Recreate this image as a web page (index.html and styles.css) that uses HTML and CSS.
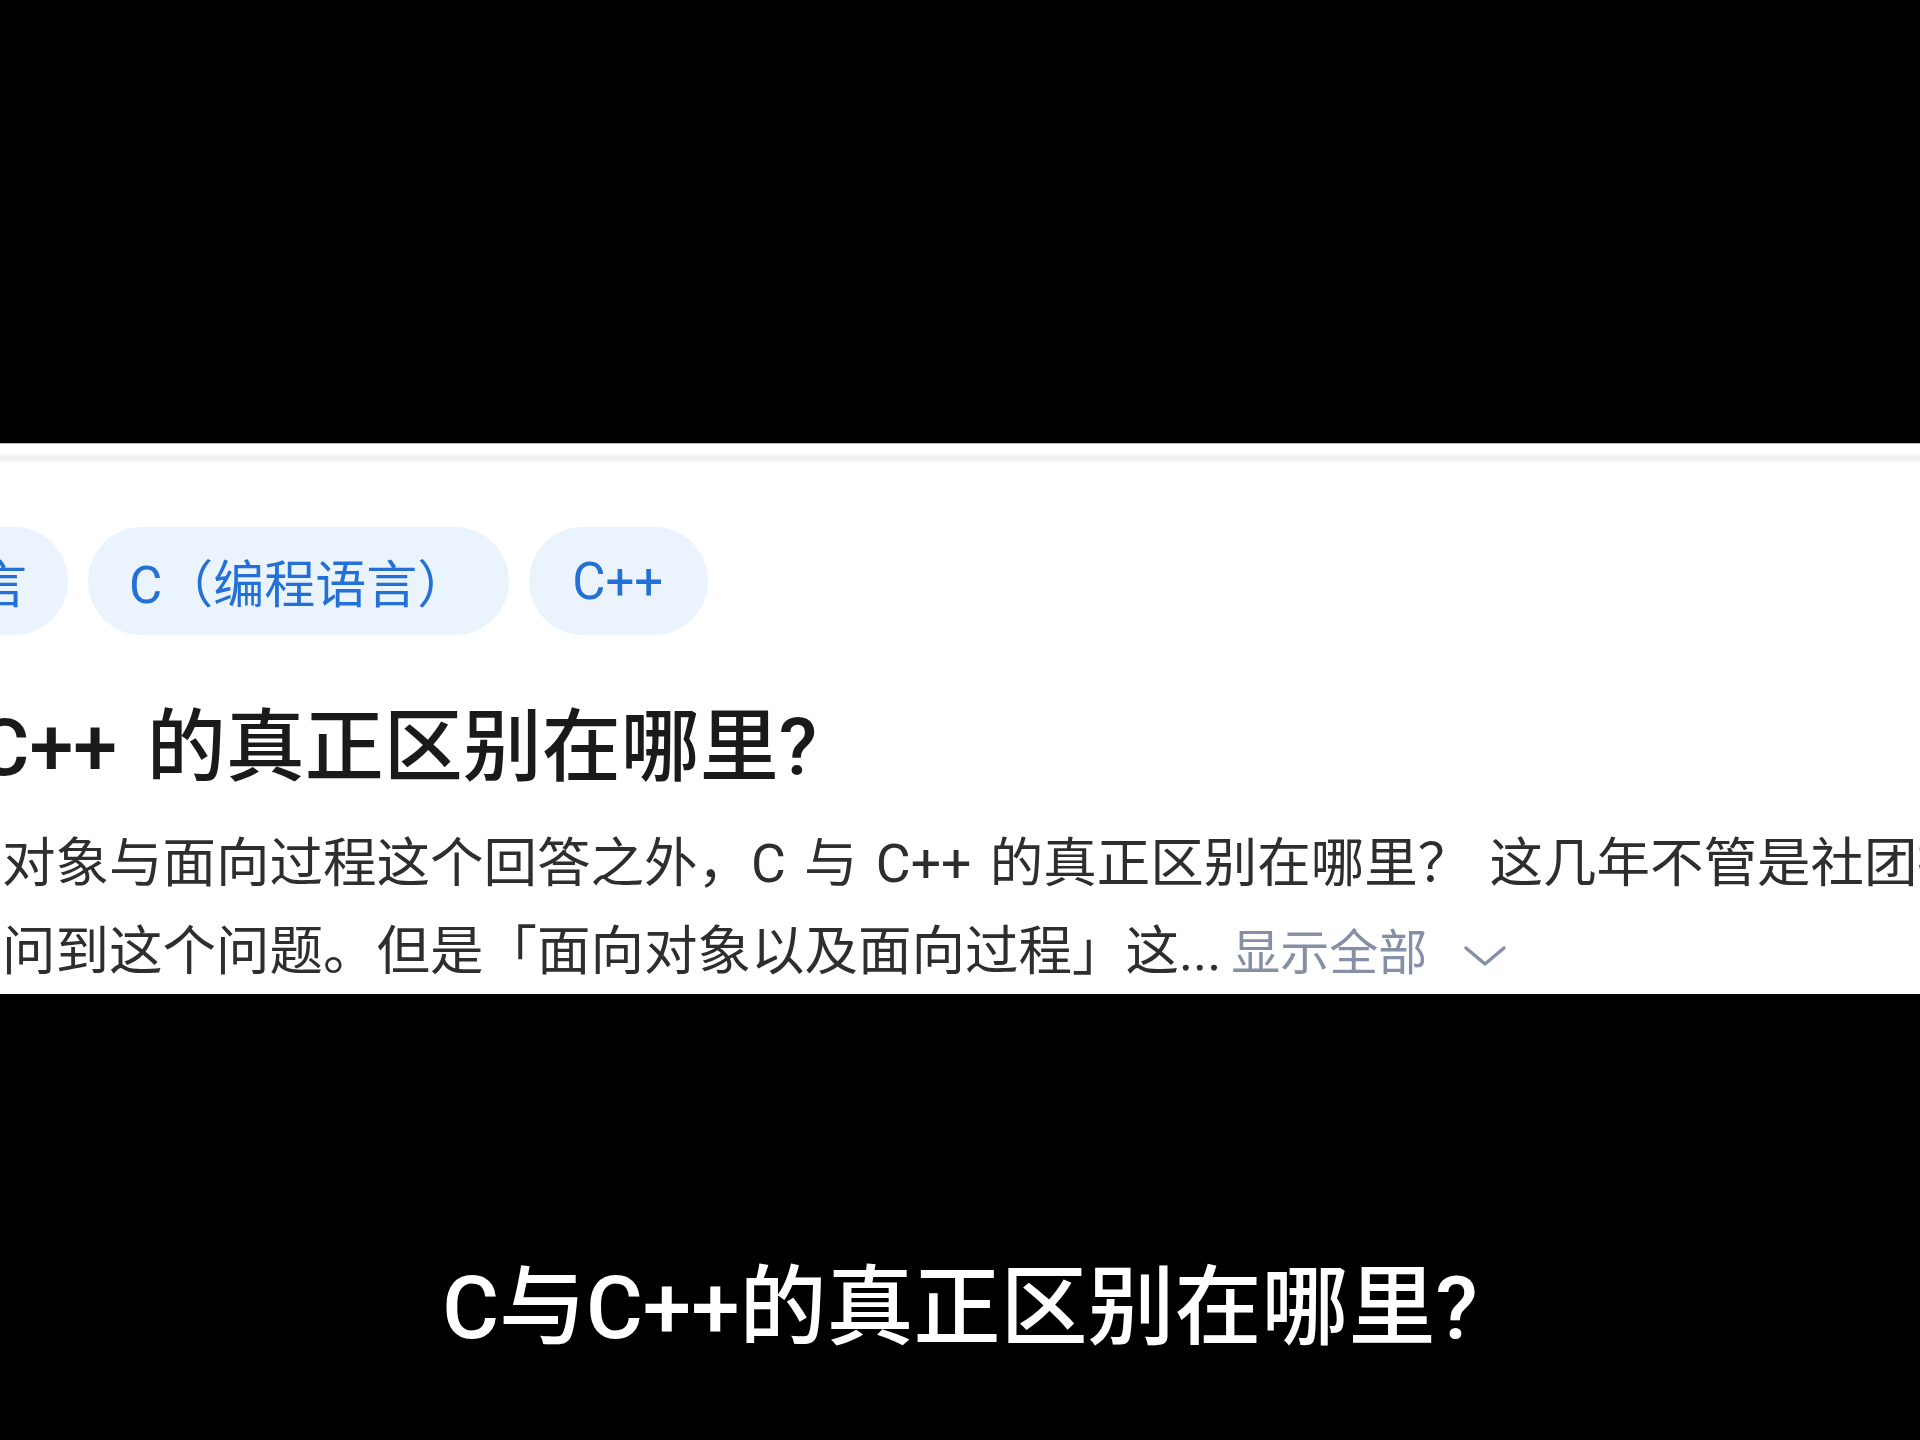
FILE: index.html
```html
<!DOCTYPE html>
<html lang="zh-CN">
<head>
<meta charset="utf-8">
<title>C 与 C++ 的真正区别在哪里?</title>
<link rel="stylesheet" href="styles.css">
</head>
<body>
<div class="stage">
  <div class="top-black"></div>
  <section class="panel">
    <div class="header-shadow"></div>
    <div class="content">
      <div class="tags">
        <span class="tag">编程语言</span>
        <span class="tag">C（编程语言）</span>
        <span class="tag tag-wide">C++</span>
      </div>
      <h1 class="title">C 与 C++ 的真正区别在哪里?</h1>
      <div class="excerpt">
        <div class="line">除了面向对象与面向过程这个回答之外，C 与 C++ 的真正区别在哪里？ 这几年不管是社团招新还是面试，总是会</div>
        <div class="line">都会被人问到这个问题。但是「面向对象以及面向过程」这...<span class="more">显示全部<svg class="chev" viewBox="0 0 44 24" width="44" height="24"><path d="M3 4 L22 20 L41 4" fill="none" stroke="#8590a6" stroke-width="3.5" stroke-linecap="round" stroke-linejoin="round"/></svg></span></div>
      </div>
    </div>
  </section>
  <div class="subtitle">C与C++的真正区别在哪里?</div>
</div>
</body>
</html>
```

FILE: styles.css
```css
html, body {
  margin: 0;
  padding: 0;
  background: #000;
}
body {
  width: 1920px;
  height: 1440px;
  overflow: hidden;
  font-family: Roboto, "Noto Sans CJK SC", "Noto Sans", sans-serif;
}
.stage {
  display: flex;
  flex-direction: column;
  width: 1920px;
  height: 1440px;
}
.top-black {
  height: 443px;
  flex: none;
}
.panel {
  flex: none;
  height: 551px;
  background: #fff;
  border-top: 1px solid #bdbdbd;
  box-sizing: border-box;
  overflow: hidden;
}
.header-shadow {
  margin-top: 9px;
  height: 10px;
  background: linear-gradient(#ffffff, #ececec 50%, #ffffff);
}
.content {
  margin-left: -212px;
  width: 2400px;
  padding-top: 64px;
}
.tags {
  display: flex;
  gap: 20px;
  height: 108px;
  margin-left: -6px;
}
.tag {
  display: flex;
  align-items: center;
  height: 108px;
  padding: 0 41px;
  border-radius: 54px;
  background: #ebf3fd;
  color: #2370d6;
  font-size: 51px;
  white-space: nowrap;
}
.tag-wide {
  padding: 0 45px 0 43px;
}
.title {
  margin: 63px 0 0;
  font-size: 79px;
  line-height: 100px;
  font-weight: 500;
  color: #1a1a1a;
  word-spacing: 10px;
  white-space: nowrap;
}
.excerpt {
  margin-top: 22px;
  font-size: 53.5px;
  line-height: 88px;
  color: #2e2e2e;
  word-spacing: 5px;
}
.line {
  white-space: nowrap;
}
.more {
  color: #8590a6;
  font-size: 49px;
  margin-left: 10px;
}
.chev {
  margin-left: 36px;
  vertical-align: 2px;
}
.subtitle {
  margin-top: 254px;
  text-align: center;
  font-size: 87px;
  line-height: 120px;
  font-weight: 500;
  color: #fff;
  text-shadow: 0 0 3px rgba(0,0,0,0.6);
  white-space: nowrap;
}
```
